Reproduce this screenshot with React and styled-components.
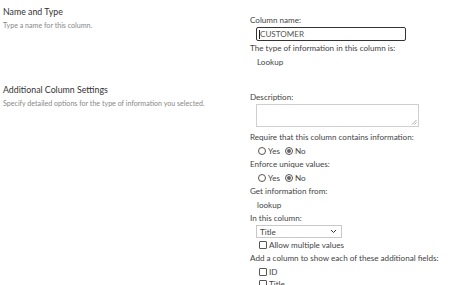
import React from 'react';
import styled, { createGlobalStyle } from 'styled-components';

const GlobalStyle = createGlobalStyle`
  body {
    margin: 0;
    background: #ffffff;
    font-family: Lato, "Open Sans", sans-serif;
    color: #444;
  }
`;

const Page = styled.div`
  width: 474px;
  height: 285px;
  overflow: hidden;
  padding-left: 3px;
  box-sizing: border-box;
`;

const Section = styled.div`
  display: grid;
  grid-template-columns: 247px 1fr;
  padding-top: 5px;
  padding-bottom: ${(p) => p.bottom || 0}px;
`;

const Intro = styled.div`
  display: flex;
  flex-direction: column;
`;

const Heading = styled.div`
  font-size: 8.8px;
  line-height: 14px;
  color: #333;
`;

const Hint = styled.div`
  font-size: 7.1px;
  line-height: 14px;
  color: #888;
`;

const Fields = styled.div`
  display: flex;
  flex-direction: column;
  align-items: flex-start;
  padding-top: 8px;
`;

const Label = styled.div`
  font-size: 8.1px;
  line-height: ${(p) => p.lh || 13}px;
  color: #444;
  white-space: nowrap;
`;

const Value = styled(Label)`
  padding-left: 7px;
`;

const TextBox = styled.div`
  width: 150px;
  height: 14px;
  margin-left: 6px;
  box-sizing: border-box;
  border: 1.3px solid #333;
  border-radius: 2px;
  display: flex;
  align-items: center;
  padding-left: 2px;
  font-size: 8.1px;
  color: #555;
`;

const Caret = styled.span`
  width: 1px;
  height: 9px;
  background: #222;
`;

const TextArea = styled.div`
  position: relative;
  width: 163px;
  height: 23px;
  margin: 0 0 4px 6px;
  box-sizing: border-box;
  border: 1px solid #cfcfcf;
`;

const Grip = styled.svg`
  position: absolute;
  right: 1px;
  bottom: 1px;
`;

const Choices = styled.div`
  display: flex;
  align-items: center;
  gap: 5px;
  height: 14px;
  padding-left: 8px;
  font-size: 8.1px;
  color: #444;
`;

const Choice = styled.label`
  display: flex;
  align-items: center;
  gap: 2px;
`;

const Radio = styled.span`
  width: 8px;
  height: 8px;
  border-radius: 50%;
  border: 1px solid #555;
  box-sizing: border-box;
  display: flex;
  align-items: center;
  justify-content: center;
  &::after {
    content: '';
    width: 4px;
    height: 4px;
    border-radius: 50%;
    background: ${(p) => (p.checked ? '#666' : 'transparent')};
  }
`;

const Select = styled.div`
  width: 86px;
  height: 13px;
  margin-left: 6px;
  box-sizing: border-box;
  border: 1px solid #c8c8c8;
  display: flex;
  align-items: center;
  justify-content: space-between;
  padding: 0 4px 0 3px;
  font-size: 8.1px;
  color: #444;
`;

const CheckRow = styled.label`
  display: flex;
  align-items: center;
  gap: 2px;
  height: ${(p) => p.h || 14}px;
  padding-left: 9px;
  font-size: 8.1px;
  color: #444;
  white-space: nowrap;
`;

const Box = styled.span`
  width: 8px;
  height: 8px;
  border: 1px solid #555;
  border-radius: 1px;
  box-sizing: border-box;
`;

const RadioPair = ({ yes }) => (
  <Choices>
    <Choice>
      <Radio checked={yes} />
      Yes
    </Choice>
    <Choice>
      <Radio checked={!yes} />
      No
    </Choice>
  </Choices>
);

const Check = ({ children, h }) => (
  <CheckRow h={h}>
    <Box />
    {children}
  </CheckRow>
);

export default function App() {
  return (
    <Page>
      <GlobalStyle />
      <Section bottom={9}>
        <Intro>
          <Heading>Name and Type</Heading>
          <Hint>Type a name for this column.</Hint>
        </Intro>
        <Fields>
          <Label lh={14}>Column name:</Label>
          <TextBox>
            <Caret />
            CUSTOMER
          </TextBox>
          <Label lh={14}>The type of information in this column is:</Label>
          <Value lh={14}>Lookup</Value>
        </Fields>
      </Section>
      <Section>
        <Intro>
          <Heading>Additional Column Settings</Heading>
          <Hint>Specify detailed options for the type of information you selected.</Hint>
        </Intro>
        <Fields>
          <Label lh={13}>Description:</Label>
          <TextArea>
            <Grip width="6" height="6" viewBox="0 0 6 6">
              <path d="M5.5 1 L1 5.5 M5.5 3.5 L3.5 5.5" stroke="#888" strokeWidth="0.7" />
            </Grip>
          </TextArea>
          <Label>Require that this column contains information:</Label>
          <RadioPair yes={false} />
          <Label>Enforce unique values:</Label>
          <RadioPair yes={false} />
          <Label>Get information from:</Label>
          <Value lh={14}>lookup</Value>
          <Label>In this column:</Label>
          <Select>
            Title
            <svg width="7" height="5" viewBox="0 0 7 5">
              <path d="M1 1 L3.5 3.5 L6 1" fill="none" stroke="#333" strokeWidth="1" />
            </svg>
          </Select>
          <Check>Allow multiple values</Check>
          <Label>Add a column to show each of these additional fields:</Label>
          <Check h={13}>ID</Check>
          <Check h={12}>Title</Check>
        </Fields>
      </Section>
    </Page>
  );
}
